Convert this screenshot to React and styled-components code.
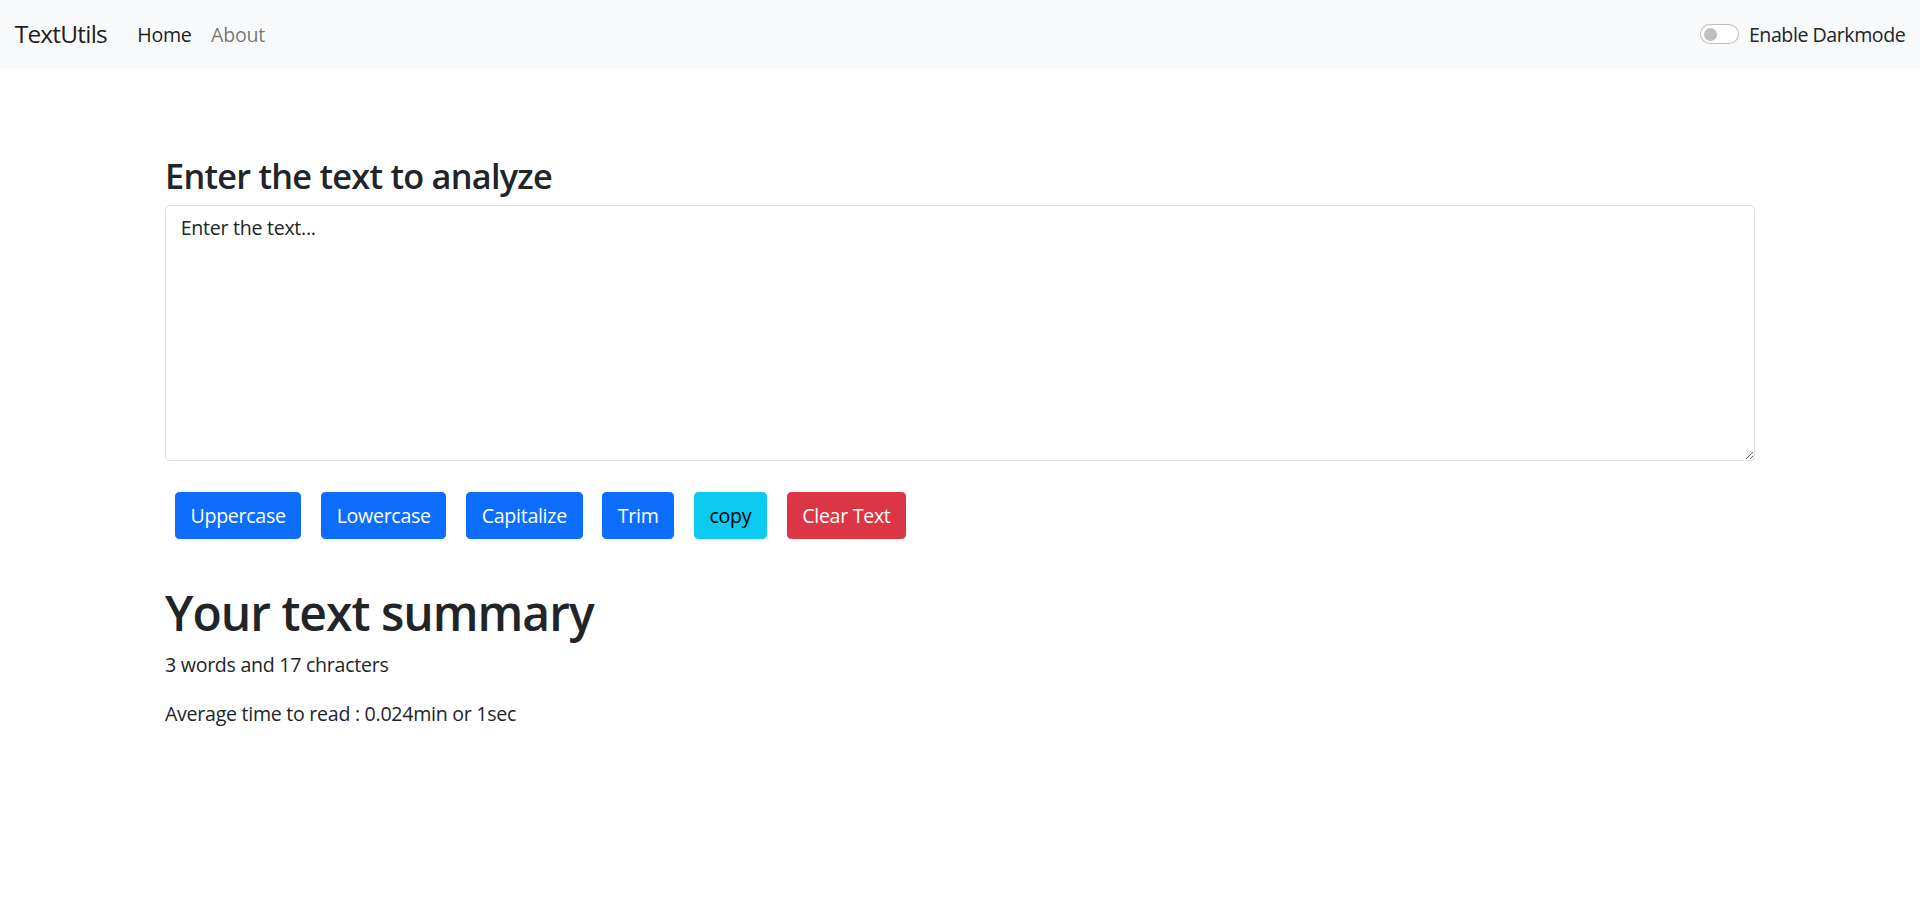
import React from "react";
import styled, { createGlobalStyle } from "styled-components";

const GlobalStyle = createGlobalStyle`
  * { box-sizing: border-box; }
  body {
    margin: 0;
    font-family: "Open Sans", "Noto Sans", sans-serif;
    font-size: 19.6px;
    line-height: 1.5;
    color: #212529;
    background: #fff;
    letter-spacing: -0.28px;
  }
`;

const App = () => {
  return (
    <>
      <GlobalStyle />
      <Navbar>
        <NavLeft>
          <Brand href="#">TextUtils</Brand>
          <NavLink href="#" $active>Home</NavLink>
          <NavLink href="#">About</NavLink>
        </NavLeft>
        <SwitchWrap>
          <SwitchTrack />
          <SwitchLabel>Enable Darkmode</SwitchLabel>
        </SwitchWrap>
      </Navbar>

      <Main>
        <Heading>Enter the text to analyze</Heading>
        <TextBox rows={8} defaultValue="Enter the text..." />
        <ButtonRow>
          <Button $variant="primary">Uppercase</Button>
          <Button $variant="primary">Lowercase</Button>
          <Button $variant="primary">Capitalize</Button>
          <Button $variant="primary">Trim</Button>
          <Button $variant="info">copy</Button>
          <Button $variant="danger">Clear Text</Button>
        </ButtonRow>

        <Summary>
          <SummaryTitle>Your text summary</SummaryTitle>
          <Text>3 words and 17 chracters</Text>
          <Text>Average time to read : 0.024min or 1sec</Text>
        </Summary>
      </Main>
    </>
  );
};
export default App;

const Navbar = styled.nav`
  height: 68.6px;
  padding: 0 14.7px;
  display: flex;
  align-items: center;
  justify-content: space-between;
  background-color: #f8f9fa;
`;

const NavLeft = styled.div`
  display: flex;
  align-items: center;
`;

const Brand = styled.a`
  font-size: 24.5px;
  line-height: 1.5;
  padding: 6px 0;
  margin-right: 20.5px;
  color: rgba(0, 0, 0, 0.9);
  text-decoration: none;
  letter-spacing: -0.8px;
`;

const NavLink = styled.a`
  padding: 9.8px 9.8px;
  font-size: 19.6px;
  color: ${(p) => (p.$active ? "rgba(0, 0, 0, 0.9)" : "rgba(0, 0, 0, 0.55)")};
  text-decoration: none;
`;

const SwitchWrap = styled.div`
  display: flex;
  align-items: center;
  gap: 10px;
`;

const SwitchTrack = styled.span`
  position: relative;
  display: inline-block;
  width: 39.2px;
  height: 19.6px;
  border: 1px solid rgba(0, 0, 0, 0.25);
  border-radius: 19.6px;
  background: #fff;

  &::after {
    content: "";
    position: absolute;
    left: 3px;
    top: 2.4px;
    width: 13px;
    height: 13px;
    border-radius: 50%;
    background: #bfbfbf;
  }
`;

const SwitchLabel = styled.span`
  font-size: 19.6px;
  color: #212529;
  letter-spacing: -0.45px;
`;

const Main = styled.main`
  width: 1590px;
  margin: 0 auto;
  padding-top: 86px;
`;

const Heading = styled.h3`
  margin: 0 0 9px;
  font-size: 34.3px;
  line-height: 1.2;
  font-weight: 600;
  color: #212529;
  letter-spacing: -0.75px;
`;

const TextBox = styled.textarea`
  display: block;
  width: 100%;
  height: 256px;
  padding: 7.35px 14.7px;
  font-family: inherit;
  font-size: 19.6px;
  line-height: 1.5;
  letter-spacing: -0.28px;
  color: #212529;
  background: #fff;
  border: 1px solid #dee2e6;
  border-radius: 4.6px;
  outline: none;
`;

const ButtonRow = styled.div`
  display: flex;
  gap: 19.6px;
  padding: 0 9.8px;
  margin-top: 31px;
`;

const colors = {
  primary: { bg: "#0d6efd", fg: "#fff" },
  info: { bg: "#0dcaf0", fg: "#000" },
  danger: { bg: "#dc3545", fg: "#fff" },
};

const Button = styled.button`
  height: 47.6px;
  padding: 0 14.7px;
  font-family: inherit;
  font-size: 19.6px;
  line-height: 1.5;
  border: 1px solid ${(p) => colors[p.$variant].bg};
  border-radius: 4.6px;
  background: ${(p) => colors[p.$variant].bg};
  color: ${(p) => colors[p.$variant].fg};
  letter-spacing: -0.3px;
  cursor: pointer;
`;

const Summary = styled.section`
  margin-top: 45px;
`;

const SummaryTitle = styled.h1`
  margin: 0 0 8.5px;
  font-size: 48px;
  line-height: 1.2;
  font-weight: 600;
  color: #212529;
  letter-spacing: -1px;
`;

const Text = styled.p`
  margin: 0 0 19.6px;
  font-size: 19.6px;
  line-height: 1.5;
`;
